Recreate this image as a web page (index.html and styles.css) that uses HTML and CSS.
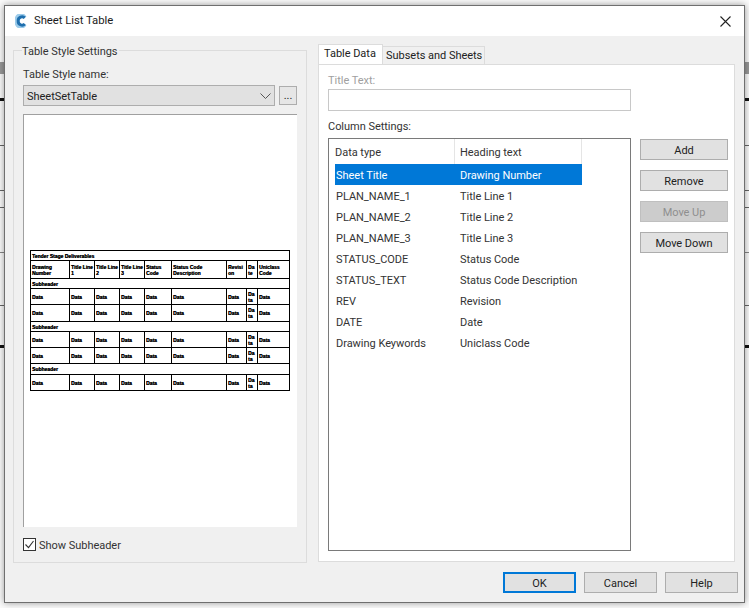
FILE: index.html
```html
<!DOCTYPE html>
<html lang="en">
<head>
<meta charset="utf-8">
<title>Sheet List Table</title>
<link rel="stylesheet" href="styles.css">
</head>
<body>
<div class="dialog">
  <header class="titlebar">
    <svg class="app-icon" viewBox="0 0 12 14" width="12" height="14" aria-hidden="true">
      <path d="M9.8 3.4A4.3 4.3 0 0 0 1.9 7a4.3 4.3 0 0 0 7.9 3.4" fill="none" stroke="#9ccbea" stroke-width="3.6"/>
      <path d="M9.8 3.9A3.9 3.9 0 0 0 3.2 7a3.9 3.9 0 0 0 6.6 3" fill="none" stroke="#1f6fae" stroke-width="3"/>
    </svg>
    <span class="title">Sheet List Table</span>
    <svg class="close" viewBox="0 0 11 11" width="11" height="11" aria-hidden="true">
      <path d="M.5.5l10 10M10.5.5l-10 10" stroke="#222" stroke-width="1.1" fill="none"/>
    </svg>
  </header>
  <main class="content">
    <div class="columns">
      <fieldset class="group">
        <legend>Table Style Settings</legend>
        <div class="label style-label">Table Style name:</div>
        <div class="style-row">
          <div class="combo">
            <span class="combo-text">SheetSetTable</span>
            <svg viewBox="0 0 11 6" width="11" height="6" aria-hidden="true"><path d="M.5.5l5 5 5-5" fill="none" stroke="#555" stroke-width="1"/></svg>
          </div>
          <div class="dots">...</div>
        </div>
        <div class="preview">
          <table class="mini">
            <colgroup>
              <col class="c1"><col class="c2"><col class="c3"><col class="c4"><col class="c5"><col class="c6"><col class="c7"><col class="c8"><col class="c9">
            </colgroup>
            <tr class="r-title"><td colspan="9">Tender Stage Deliverables</td></tr>
            <tr class="r-head"><td>Drawing Number</td><td>Title Line 1</td><td>Title Line 2</td><td>Title Line 3</td><td>Status Code</td><td>Status Code Description</td><td>Revisi on</td><td>Da te</td><td>Uniclass Code</td></tr>
            <tr class="r-sub"><td colspan="9">Subheader</td></tr>
            <tr class="r-data"><td>Data</td><td>Data</td><td>Data</td><td>Data</td><td>Data</td><td>Data</td><td>Data</td><td>Da ta</td><td>Data</td></tr>
            <tr class="r-data r-tall"><td>Data</td><td>Data</td><td>Data</td><td>Data</td><td>Data</td><td>Data</td><td>Data</td><td>Da ta</td><td>Data</td></tr>
            <tr class="r-sub"><td colspan="9">Subheader</td></tr>
            <tr class="r-data"><td>Data</td><td>Data</td><td>Data</td><td>Data</td><td>Data</td><td>Data</td><td>Data</td><td>Da ta</td><td>Data</td></tr>
            <tr class="r-data"><td>Data</td><td>Data</td><td>Data</td><td>Data</td><td>Data</td><td>Data</td><td>Data</td><td>Da ta</td><td>Data</td></tr>
            <tr class="r-sub r-tall"><td colspan="9">Subheader</td></tr>
            <tr class="r-data"><td>Data</td><td>Data</td><td>Data</td><td>Data</td><td>Data</td><td>Data</td><td>Data</td><td>Da ta</td><td>Data</td></tr>
          </table>
        </div>
        <label class="check-row">
          <span class="check"><svg viewBox="0 0 13 13" width="13" height="13" aria-hidden="true"><path d="M2.5 6.5l3 3.2 5-6.7" fill="none" stroke="#333" stroke-width="1.1"/></svg></span>
          <span class="check-text">Show Subheader</span>
        </label>
      </fieldset>
      <section class="tabs">
        <div class="tabstrip">
          <div class="tab active">Table Data</div>
          <div class="tab">Subsets and Sheets</div>
        </div>
        <div class="panel">
          <div class="label disabled">Title Text:</div>
          <div class="input"></div>
          <div class="label col-label">Column Settings:</div>
          <div class="list-row">
            <div class="list">
              <div class="list-head">
                <div class="h1">Data type</div>
                <div class="h2">Heading text</div>
              </div>
              <div class="item selected"><span class="k">Sheet Title</span><span class="v">Drawing Number</span></div>
              <div class="item"><span class="k">PLAN_NAME_1</span><span class="v">Title Line 1</span></div>
              <div class="item"><span class="k">PLAN_NAME_2</span><span class="v">Title Line 2</span></div>
              <div class="item"><span class="k">PLAN_NAME_3</span><span class="v">Title Line 3</span></div>
              <div class="item"><span class="k">STATUS_CODE</span><span class="v">Status Code</span></div>
              <div class="item"><span class="k">STATUS_TEXT</span><span class="v">Status Code Description</span></div>
              <div class="item"><span class="k">REV</span><span class="v">Revision</span></div>
              <div class="item"><span class="k">DATE</span><span class="v">Date</span></div>
              <div class="item"><span class="k">Drawing Keywords</span><span class="v">Uniclass Code</span></div>
            </div>
            <div class="side-buttons">
              <div class="btn">Add</div>
              <div class="btn">Remove</div>
              <div class="btn off">Move Up</div>
              <div class="btn">Move Down</div>
            </div>
          </div>
        </div>
      </section>
    </div>
    <footer class="footer">
      <div class="btn wide default">OK</div>
      <div class="btn wide">Cancel</div>
      <div class="btn wide">Help</div>
    </footer>
  </main>
</div>
</body>
</html>
```

FILE: styles.css
```css
* { box-sizing: border-box; }
html, body { height: 100%; }
body {
  margin: 0;
  overflow: hidden;
  padding: 5px 0 0 4px;
  font: 11px/16px Roboto, "Liberation Sans", sans-serif;
  letter-spacing: -.03px;
  color: #222;
  background-color: #fbfbfb;
  background-image: linear-gradient(to bottom,
    transparent 0 62px, #999 62px 74px, transparent 74px 98px, #111 98px 101px,
    transparent 101px 145px, #666 145px 146px, transparent 146px 190px, #666 190px 191px,
    transparent 191px 207px, #666 207px 208px, transparent 208px 252px, #888 252px 253px,
    transparent 253px 305px, #666 305px 306px, transparent 306px 345px, #111 345px 348px,
    transparent 348px);
}
.dialog {
  width: 741px;
  height: 598px;
  border: 1px solid #6f6f6f;
  background: #f0f0f0;
  box-shadow: 0 0 7px rgba(0, 0, 0, .4);
  display: flex;
  flex-direction: column;
}
.titlebar {
  height: 30px;
  flex: none;
  background: #fff;
  display: flex;
  align-items: center;
  padding: 0 13px 0 10px;
}
.app-icon { flex: none; margin-right: 7px; }
.title { flex: 1; font-size: 11.3px; color: #1a1a1a; }
.content { flex: 1; display: flex; flex-direction: column; min-height: 0; padding: 6px 6px 0 8px; }
.columns { display: flex; align-items: flex-start; }

.group {
  width: 294px;
  height: 521px;
  margin: 0 11px 0 0;
  padding: 0 9px;
  min-width: 0;
  border: 1px solid #dcdcdc;
  flex: none;
}
.group legend { padding: 4px 1px 0 0; margin-left: -1px; height: 16px; line-height: 12px; color: #333; }
.label { height: 16px; padding-top: 1px; line-height: 16px; color: #333; }
.style-label { margin-top: 8px; }
.style-row { display: flex; margin-top: 3px; gap: 4px; }
.combo {
  width: 252px;
  height: 21px;
  background: #e1e1e1;
  border: 1px solid #adadad;
  display: flex;
  align-items: center;
  justify-content: space-between;
  padding: 0 3px 0 3px;
}
.combo-text { padding-top: 2px; }
.dots {
  width: 18px;
  height: 19px;
  margin-top: 1px;
  border: 1px solid #adadad;
  background: #e6e6e6;
  text-align: center;
  line-height: 17px;
}
.preview {
  width: 274px;
  height: 413px;
  margin-top: 8px;
  background: #fff;
  border-left: 1px solid #a0a0a0;
  border-top: 1px solid #a0a0a0;
  padding: 135px 0 0 6px;
}
.mini {
  width: 259px;
  table-layout: fixed;
  border-collapse: collapse;
  font: bold 5px/6px "Liberation Sans", sans-serif;
  letter-spacing: 0;
  color: #000;
  text-shadow: .3px 0 0 #000;
}
.mini td { border: 1px solid #000; padding: 0 1px; overflow: hidden; vertical-align: middle; }
.c1 { width: 39px; } .c2 { width: 25px; } .c3 { width: 25px; } .c4 { width: 25px; }
.c5 { width: 27px; } .c6 { width: 55px; } .c7 { width: 20px; } .c8 { width: 11px; } .c9 { width: 32px; }
.r-title { height: 10px; }
.r-head { height: 18px; }
.r-sub { height: 10px; }
.r-data { height: 16px; }
.r-data.r-tall { height: 17px; }
.r-sub.r-tall { height: 11px; }
.check-row { display: flex; align-items: flex-start; margin-top: 10px; gap: 3px; color: #333; }
.check-text { padding-top: 1px; }
.check { width: 13px; height: 13px; margin-top: 1px; border: 1px solid #333; background: #fff; display: flex; align-items: center; justify-content: center; flex: none; }
.check svg { flex: none; }

.tabs { width: 417px; margin-top: 2px; flex: none; }
.tabstrip { display: flex; align-items: flex-end; height: 20px; }
.tab {
  height: 18px;
  padding: 0 3px;
  line-height: 17px;
  background: #f0f0f0;
  border: 1px solid #dcdcdc;
  border-bottom: 0;
  border-left: 0;
  color: #222;
  white-space: nowrap;
}
.tab.active {
  height: 20px;
  width: 65px;
  padding: 0 0 0 5px;
  background: #fff;
  border-left: 1px solid #dcdcdc;
}
.tab:nth-child(2) { width: 102px; }
.panel {
  height: 498px;
  background: #fff;
  border: 1px solid #dcdcdc;
  padding: 7px 0 0 9px;
}
.disabled { color: #a0a0a0; }
.input { width: 303px; height: 22px; margin-top: 1px; border: 1px solid #c8c8c8; background: #fff; }
.col-label { margin-top: 7px; }
.list-row { display: flex; margin-top: 4px; }
.list { width: 303px; height: 413px; border: 1px solid #7a7a7a; background: #fff; padding-left: 6px; flex: none; }
.list-head { display: flex; height: 25px; color: #333; }
.h1 { width: 120px; padding: 6px 0 0 0; border-right: 1px solid #e5e5e5; }
.h2 { width: 127px; padding: 6px 0 0 5px; border-right: 1px solid #e5e5e5; }
.item { display: flex; width: 247px; height: 21px; line-height: 24px; color: #333; }
.k { width: 120px; padding-left: 1px; flex: none; }
.v { padding-left: 5px; white-space: nowrap; }
.item.selected { background: #0078d7; color: #fff; }
.side-buttons { display: flex; flex-direction: column; gap: 10px; margin: 1px 0 0 9px; }
.btn {
  width: 88px;
  height: 21px;
  padding-top: 1px;
  background: #e1e1e1;
  border: 1px solid #adadad;
  text-align: center;
  line-height: 20px;
  color: #222;
}
.btn.off { background: #cccccc; color: #8f8f8f; border-color: #bfbfbf; }
.footer { display: flex; justify-content: flex-end; gap: 8px; margin-top: 9px; }
.btn.wide { width: 73px; }
.btn.default { border: 2px solid #0078d7; padding-top: 0; line-height: 19px; }
```
